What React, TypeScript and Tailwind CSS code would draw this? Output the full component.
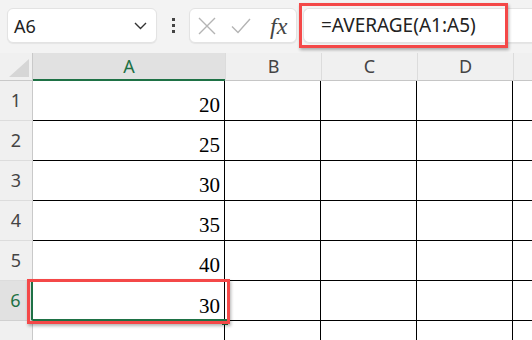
import React from "react";

const ui = { fontFamily: '"Segoe UI", "Noto Sans", "Open Sans", sans-serif' };
const serif = { fontFamily: '"Liberation Serif", "Times New Roman", serif' };

const rows = [20, 25, 30, 35, 40, 30];
const cols = ["A", "B", "C", "D"];

function ToolBar() {
  return (
    <div className="relative flex h-[53px] items-start bg-[#f3f3f3] pt-[8px]" style={ui}>
      {/* name box */}
      <div className="ml-[7px] flex h-[35px] w-[150px] items-center justify-between rounded-[6px] border border-[#e3e3e3] bg-white pl-[6px] pr-[9px] shadow-[0_1px_1px_rgba(0,0,0,0.06)]">
        <span className="text-[18px] leading-none text-[#222]">A6</span>
        <svg width="13" height="8" viewBox="0 0 13 8">
          <path d="M1 1l5.5 5.5L12 1" fill="none" stroke="#333" strokeWidth="1.4" />
        </svg>
      </div>
      {/* dots */}
      <div className="flex h-[35px] w-[32px] flex-col items-center justify-center gap-[3px]">
        <span className="h-[3px] w-[3px] bg-[#444]" />
        <span className="h-[3px] w-[3px] bg-[#444]" />
        <span className="h-[3px] w-[3px] bg-[#444]" />
      </div>
      {/* cancel / enter / fx */}
      <div className="flex h-[35px] w-[108px] items-center rounded-[6px] border border-[#e3e3e3] bg-white pl-[8px] shadow-[0_1px_1px_rgba(0,0,0,0.06)]">
        <svg width="18" height="18" viewBox="0 0 18 18">
          <path d="M1 1l16 16M17 1L1 17" stroke="#b4b4b4" strokeWidth="1.4" fill="none" />
        </svg>
        <svg className="ml-[15px]" width="20" height="16" viewBox="0 0 20 16">
          <path d="M1 8.5l6 6L19 1" stroke="#b4b4b4" strokeWidth="1.4" fill="none" />
        </svg>
        <span className="ml-[19px] text-[24px] italic leading-none text-[#444]" style={serif}>
          fx
        </span>
      </div>
      {/* formula box */}
      <div className="ml-[6px] flex h-[35px] flex-1 items-center rounded-l-[6px] border border-r-0 border-[#e3e3e3] bg-white pl-[17px] shadow-[0_1px_1px_rgba(0,0,0,0.06)]">
        <span className="text-[19px] leading-none text-[#222]">=AVERAGE(A1:A5)</span>
      </div>
      <div className="absolute left-[299px] top-[3px] h-[45px] w-[209px] border-[3px] border-[#f44848] shadow-[1px_2px_3px_rgba(0,0,0,0.3)]" />
    </div>
  );
}

function HeaderRow() {
  return (
    <div className="flex h-[28px]" style={ui}>
      <div className="relative w-[33px] shrink-0 border-r border-b border-[#c9c9c9] bg-[#f0f0f0]">
        <svg className="absolute bottom-[3px] right-[3px]" width="20" height="18" viewBox="0 0 20 18">
          <path d="M20 0L20 18L0 18Z" fill="#d6d6d6" />
        </svg>
      </div>
      {cols.map((c, i) => (
        <div
          key={c}
          className={
            i === 0
              ? "flex w-[192px] shrink-0 items-center justify-center border-b-2 border-[#1e7145] bg-[#e1e1e1] text-[18px] text-[#1e7145]"
              : "flex w-[96px] shrink-0 items-center justify-center border-b border-l border-[#c6c6c6] border-l-[#dcdcdc] bg-[#f0f0f0] text-[18px] text-[#444]"
          }
        >
          {c}
        </div>
      ))}
      <div className="flex-1 border-b border-l border-[#c6c6c6] border-l-[#dcdcdc] bg-[#f0f0f0]" />
    </div>
  );
}

function DataRow({ n, value }: { n: number; value?: number }) {
  const sel = n === 6;
  return (
    <div className="flex h-[40px]">
      <div
        className={
          sel
            ? "flex w-[33px] shrink-0 items-center justify-center border-b border-r-2 border-b-[#d0d0d0] border-r-[#1e7145] bg-[#e1e1e1] text-[18px] text-[#1e7145]"
            : "flex w-[33px] shrink-0 items-center justify-center border-b border-r border-b-[#dcdcdc] border-r-[#c9c9c9] bg-[#f0f0f0] text-[18px] text-[#444]"
        }
        style={ui}
      >
        {n <= 6 ? n : ""}
      </div>
      <div
        className={
          sel
            ? "flex w-[192px] shrink-0 items-end justify-end border-r border-b-2 border-r-black border-b-[#1e7145] bg-white pb-[2px] pr-[4px] text-[21px] leading-none text-black"
            : "flex w-[192px] shrink-0 items-end justify-end border-r border-b border-black bg-white pb-[4px] pr-[4px] text-[21px] leading-none text-black"
        }
        style={serif}
      >
        {value}
      </div>
      <div className="w-[96px] shrink-0 border-r border-b border-black bg-white" />
      <div className="w-[96px] shrink-0 border-r border-b border-black bg-white" />
      <div className="w-[96px] shrink-0 border-r border-b border-black bg-white" />
      <div className="flex-1 border-b border-black bg-white" />
    </div>
  );
}

export default function App() {
  return (
    <div className="relative h-[340px] w-[532px] overflow-hidden bg-white">
      <ToolBar />
      <HeaderRow />
      {rows.map((v, i) => (
        <DataRow key={i} n={i + 1} value={v} />
      ))}
      <DataRow n={7} />
      {/* fill handle */}
      <div className="absolute left-[222px] top-[319px] h-[6px] w-[6px] bg-[#1e7145]" />
      {/* highlight around A6 */}
      <div className="absolute left-[27px] top-[279px] h-[45px] w-[203px] border-[3px] border-[#f44848] shadow-[1px_2px_3px_rgba(0,0,0,0.3)]" />
    </div>
  );
}
